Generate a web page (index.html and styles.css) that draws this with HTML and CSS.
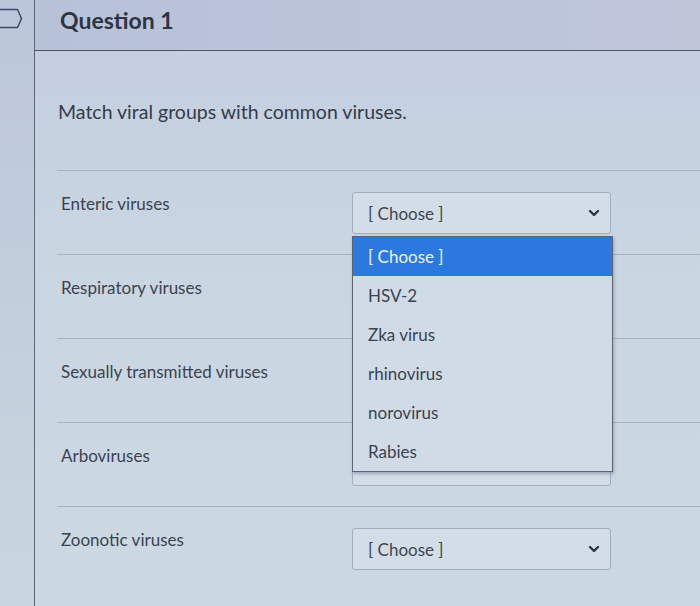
FILE: index.html
```html
<!DOCTYPE html>
<html lang="en">
<head>
    <meta charset="UTF-8">
    <meta name="viewport" content="width=device-width, initial-scale=1.0">
    <title>Question 1</title>
    <link rel="stylesheet" href="styles.css">
</head>
<body>
    <div class="page">
        <!-- Left rail with the flag marker -->
        <aside class="rail">
            <svg class="flag" width="24" height="22" viewBox="0 0 24 22">
                <path d="M-2 1.5 H17.5 L21.5 10.5 L17.5 19.5 H-2" fill="none" stroke="#3d4868" stroke-width="1.5" stroke-linejoin="round"/>
            </svg>
        </aside>

        <main class="content">
            <header class="q-header">
                <h2>Question 1</h2>
            </header>

            <div class="q-body">
                <p class="q-text">Match viral groups with common viruses.</p>

                <div class="match-list">
                    <div class="match-row">
                        <span class="label">Enteric viruses</span>
                        <div class="select-wrap">
                            <div class="select">
                                <span>[ Choose ]</span>
                                <svg class="chevron" width="12" height="8" viewBox="0 0 12 8"><path d="M2 2 L6 6 L10 2" fill="none" stroke="#2f3540" stroke-width="2.4" stroke-linecap="round" stroke-linejoin="round"/></svg>
                            </div>
                            <!-- open dropdown -->
                            <ul class="options">
                                <li class="active">[ Choose ]</li>
                                <li>HSV-2</li>
                                <li>Zka virus</li>
                                <li>rhinovirus</li>
                                <li>norovirus</li>
                                <li>Rabies</li>
                            </ul>
                        </div>
                    </div>

                    <!-- these selects sit under the open list -->
                    <div class="match-row">
                        <span class="label">Respiratory viruses</span>
                        <div class="select-wrap">
                            <div class="select"></div>
                        </div>
                    </div>

                    <div class="match-row">
                        <span class="label">Sexually transmitted viruses</span>
                        <div class="select-wrap">
                            <div class="select"></div>
                        </div>
                    </div>

                    <div class="match-row">
                        <span class="label">Arboviruses</span>
                        <div class="select-wrap">
                            <div class="select"></div>
                        </div>
                    </div>

                    <div class="match-row">
                        <span class="label">Zoonotic viruses</span>
                        <div class="select-wrap">
                            <div class="select">
                                <span>[ Choose ]</span>
                                <svg class="chevron" width="12" height="8" viewBox="0 0 12 8"><path d="M2 2 L6 6 L10 2" fill="none" stroke="#2f3540" stroke-width="2.4" stroke-linecap="round" stroke-linejoin="round"/></svg>
                            </div>
                        </div>
                    </div>
                </div>
            </div>
        </main>
    </div>
</body>
</html>
```

FILE: styles.css
```css
body {
    margin: 0;
    font-family: Lato, "Open Sans", sans-serif;
    color: #3a4250;
    background: #c9d5e1;
}

.page {
    display: flex;
    height: 606px;
    overflow: hidden;
}

/* Left rail */
.rail {
    width: 34px;
    flex-shrink: 0;
    border-right: 1px solid #5c6678;
    background: linear-gradient(180deg, #bcc6da 0%, #c4d0dd 60%, #c9d6df 100%);
}
.flag {
    display: block;
    margin-top: 8px;
}

.content {
    flex: 1;
    display: flex;
    flex-direction: column;
    background: linear-gradient(180deg, #c3cde0 0%, #c9d5e1 40%, #ccd9e2 100%);
}

/* Header */
.q-header {
    height: 50px;
    border-bottom: 1px solid #4d5566;
    background: linear-gradient(90deg, #b7c1d8 0%, #bcc5da 60%, #c0c6da 100%);
    padding-left: 25px;
}
.q-header h2 {
    margin: 0;
    font-size: 23px;
    font-weight: 700;
    line-height: 40px;
    color: #2e3542;
}

.q-body {
    padding-left: 22px;
}
.q-text {
    margin: 49px 0 0 1px;
    font-size: 19.5px;
    line-height: 24px;
    color: #353c48;
}

/* Match rows */
.match-list {
    margin-top: 46px;
}
.match-row {
    display: grid;
    grid-template-columns: 295px 259px;
    align-items: start;
    border-top: 1px solid #a9b4c2;
    padding-top: 21px;
    height: 62px;
}
.label {
    font-size: 17px;
    line-height: 22px;
    margin-top: 1px;
    padding-left: 4px;
    color: #3b4350;
}

.select-wrap {
    position: relative;
}
.select {
    display: flex;
    align-items: center;
    justify-content: space-between;
    height: 42px;
    box-sizing: border-box;
    padding: 0 10px 0 15px;
    border: 1px solid #a3aebd;
    border-radius: 3px;
    background: #d3dde7;
    font-size: 17px;
    color: #3d4551;
}

/* Open dropdown list */
.options {
    position: absolute;
    top: 44px;
    left: 0;
    width: 259px;
    margin: 0;
    padding: 0;
    list-style: none;
    background: #d0dbe5;
    border: 1px solid #5a6474;
    box-shadow: 1px 2px 3px rgba(60, 70, 110, 0.35);
    z-index: 2;
}
.options li {
    height: 39px;
    line-height: 39px;
    padding-left: 15px;
    font-size: 17px;
    color: #3a4351;
}
.options li.active {
    background: #2b79df;
    color: #eef3fb;
}
```
